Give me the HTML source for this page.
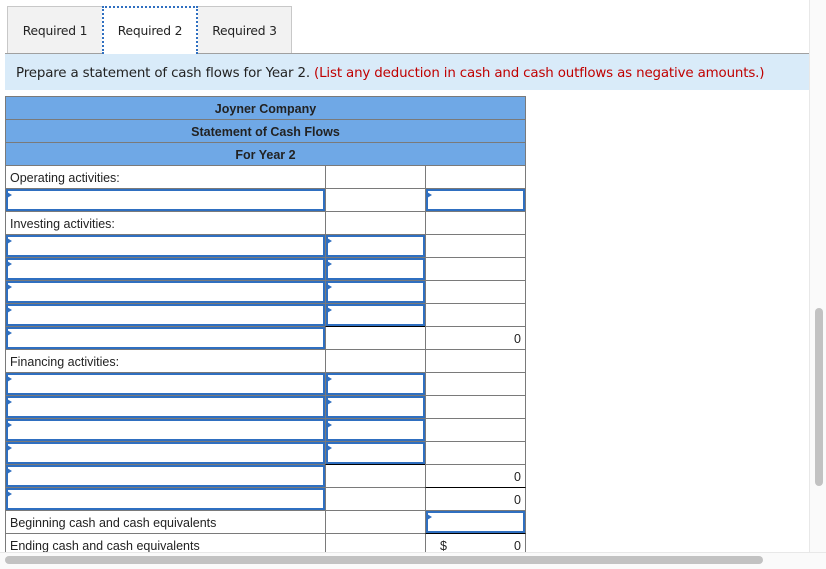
<!DOCTYPE html>
<html><head><meta charset="utf-8"><style>
*{box-sizing:border-box;margin:0;padding:0}
body{width:826px;height:569px;background:#fff;position:relative;overflow:hidden;font-family:"Liberation Sans",Arial,sans-serif}
.tab{position:absolute;top:6px;height:48px;background:#f2f2f2;border:1px solid #c8c8c8;font-family:"DejaVu Sans",Verdana,sans-serif;font-size:12.3px;color:#222;text-align:center;line-height:48px;letter-spacing:-0.2px}
.tab.act{background:#fff;border:2px dotted #2f6fc0;border-bottom:none;height:48px;line-height:46px;z-index:2}
.instr{position:absolute;left:5px;top:53px;width:804px;height:37px;background:#d9ebf9;border-top:1px solid #a0a0a0;font-family:"DejaVu Sans",Verdana,sans-serif;font-size:13.4px;color:#222;padding:12px 0 0 11px;letter-spacing:-0.15px;white-space:nowrap}
.instr span{color:#c00000}
.hd{position:absolute;left:5px;width:521px;height:24px;background:#6fa8e6;border:1px solid #7a7a7a;font-weight:bold;font-size:12.5px;color:#222;text-align:center;line-height:24px}
.c{position:absolute;height:24px;border:1px solid #7a7a7a;font-size:12.5px;color:#222;line-height:24px;padding-left:4px;background:#fff}
.inp{position:absolute;height:22px;border:2px solid #2f6fc0;background:#fff}
.inp:before{content:"";position:absolute;left:-1px;top:1px;border-left:5px solid #2f6fc0;border-top:3px solid transparent;border-bottom:3px solid transparent}
.n{text-align:right;padding-right:4px}
</style></head><body>
<div class="tab" style="left:7px;width:96px">Required 1</div>
<div class="tab act" style="left:102px;width:96px">Required 2</div>
<div class="tab" style="left:197px;width:95px">Required 3</div>
<div class="instr">Prepare a statement of cash flows for Year 2. <span>(List any deduction in cash and cash outflows as negative amounts.)</span></div>

<div class="hd" style="top:96px">Joyner Company</div>
<div class="hd" style="top:119px">Statement of Cash Flows</div>
<div class="hd" style="top:142px">For Year 2</div>

<div class="c" style="top:165px;left:5px;width:321px">Operating activities:</div><div class="c" style="top:165px;left:325px;width:101px"></div><div class="c" style="top:165px;left:425px;width:101px"></div>
<div class="c" style="top:188px;left:5px;width:321px"></div><div class="c" style="top:188px;left:325px;width:101px"></div><div class="c" style="top:188px;left:425px;width:101px"></div>
<div class="inp" style="top:189px;left:6px;width:319px"></div><div class="inp" style="top:189px;left:426px;width:99px"></div>
<div class="c" style="top:211px;left:5px;width:321px">Investing activities:</div><div class="c" style="top:211px;left:325px;width:101px"></div><div class="c" style="top:211px;left:425px;width:101px"></div>

<div class="c" style="top:234px;left:5px;width:321px"></div><div class="c" style="top:234px;left:325px;width:101px"></div><div class="c" style="top:234px;left:425px;width:101px"></div>
<div class="inp" style="top:235px;left:6px;width:319px"></div><div class="inp" style="top:235px;left:326px;width:99px"></div>
<div class="c" style="top:257px;left:5px;width:321px"></div><div class="c" style="top:257px;left:325px;width:101px"></div><div class="c" style="top:257px;left:425px;width:101px"></div>
<div class="inp" style="top:258px;left:6px;width:319px"></div><div class="inp" style="top:258px;left:326px;width:99px"></div>
<div class="c" style="top:280px;left:5px;width:321px"></div><div class="c" style="top:280px;left:325px;width:101px"></div><div class="c" style="top:280px;left:425px;width:101px"></div>
<div class="inp" style="top:281px;left:6px;width:319px"></div><div class="inp" style="top:281px;left:326px;width:99px"></div>
<div class="c" style="top:303px;left:5px;width:321px"></div><div class="c" style="top:303px;left:325px;width:101px"></div><div class="c" style="top:303px;left:425px;width:101px"></div>
<div class="inp" style="top:304px;left:6px;width:319px"></div><div class="inp" style="top:304px;left:326px;width:99px"></div>
<div class="c" style="top:326px;left:5px;width:321px"></div><div class="c" style="top:326px;left:325px;width:101px;border-top-color:#000"></div><div class="c n" style="top:326px;left:425px;width:101px">0</div>
<div class="inp" style="top:327px;left:6px;width:319px"></div>

<div class="c" style="top:349px;left:5px;width:321px">Financing activities:</div><div class="c" style="top:349px;left:325px;width:101px"></div><div class="c" style="top:349px;left:425px;width:101px"></div>
<div class="c" style="top:372px;left:5px;width:321px"></div><div class="c" style="top:372px;left:325px;width:101px"></div><div class="c" style="top:372px;left:425px;width:101px"></div>
<div class="inp" style="top:373px;left:6px;width:319px"></div><div class="inp" style="top:373px;left:326px;width:99px"></div>
<div class="c" style="top:395px;left:5px;width:321px"></div><div class="c" style="top:395px;left:325px;width:101px"></div><div class="c" style="top:395px;left:425px;width:101px"></div>
<div class="inp" style="top:396px;left:6px;width:319px"></div><div class="inp" style="top:396px;left:326px;width:99px"></div>
<div class="c" style="top:418px;left:5px;width:321px"></div><div class="c" style="top:418px;left:325px;width:101px"></div><div class="c" style="top:418px;left:425px;width:101px"></div>
<div class="inp" style="top:419px;left:6px;width:319px"></div><div class="inp" style="top:419px;left:326px;width:99px"></div>
<div class="c" style="top:441px;left:5px;width:321px"></div><div class="c" style="top:441px;left:325px;width:101px"></div><div class="c" style="top:441px;left:425px;width:101px"></div>
<div class="inp" style="top:442px;left:6px;width:319px"></div><div class="inp" style="top:442px;left:326px;width:99px"></div>
<div class="c" style="top:464px;left:5px;width:321px"></div><div class="c" style="top:464px;left:325px;width:101px;border-top-color:#000"></div><div class="c n" style="top:464px;left:425px;width:101px">0</div>
<div class="inp" style="top:465px;left:6px;width:319px"></div>
<div class="c" style="top:487px;left:5px;width:321px"></div><div class="c" style="top:487px;left:325px;width:101px"></div><div class="c n" style="top:487px;left:425px;width:101px;border-top-color:#000">0</div>
<div class="inp" style="top:488px;left:6px;width:319px"></div>
<div class="c" style="top:510px;left:5px;width:321px">Beginning cash and cash equivalents</div><div class="c" style="top:510px;left:325px;width:101px"></div><div class="c" style="top:510px;left:425px;width:101px"></div>
<div class="inp" style="top:511px;left:426px;width:99px"></div>
<div class="c" style="top:533px;left:5px;width:321px">Ending cash and cash equivalents</div><div class="c" style="top:533px;left:325px;width:101px"></div><div class="c n" style="top:533px;left:425px;width:101px;border-top-color:#000"><span style="float:left;margin-left:10px">$</span>0</div>

<div style="position:absolute;left:0;top:552px;width:826px;height:17px;background:#fafafa;border-top:1px solid #e8e8e8"></div>
<div style="position:absolute;left:5px;top:556px;width:758px;height:8px;border-radius:4px;background:#c2c2c2"></div>
<div style="position:absolute;left:809px;top:0;width:17px;height:552px;background:#fafafa;border-left:1px solid #e8e8e8"></div>
<div style="position:absolute;left:815px;top:308px;width:8px;height:178px;border-radius:4px;background:#c2c2c2"></div>
</body></html>
